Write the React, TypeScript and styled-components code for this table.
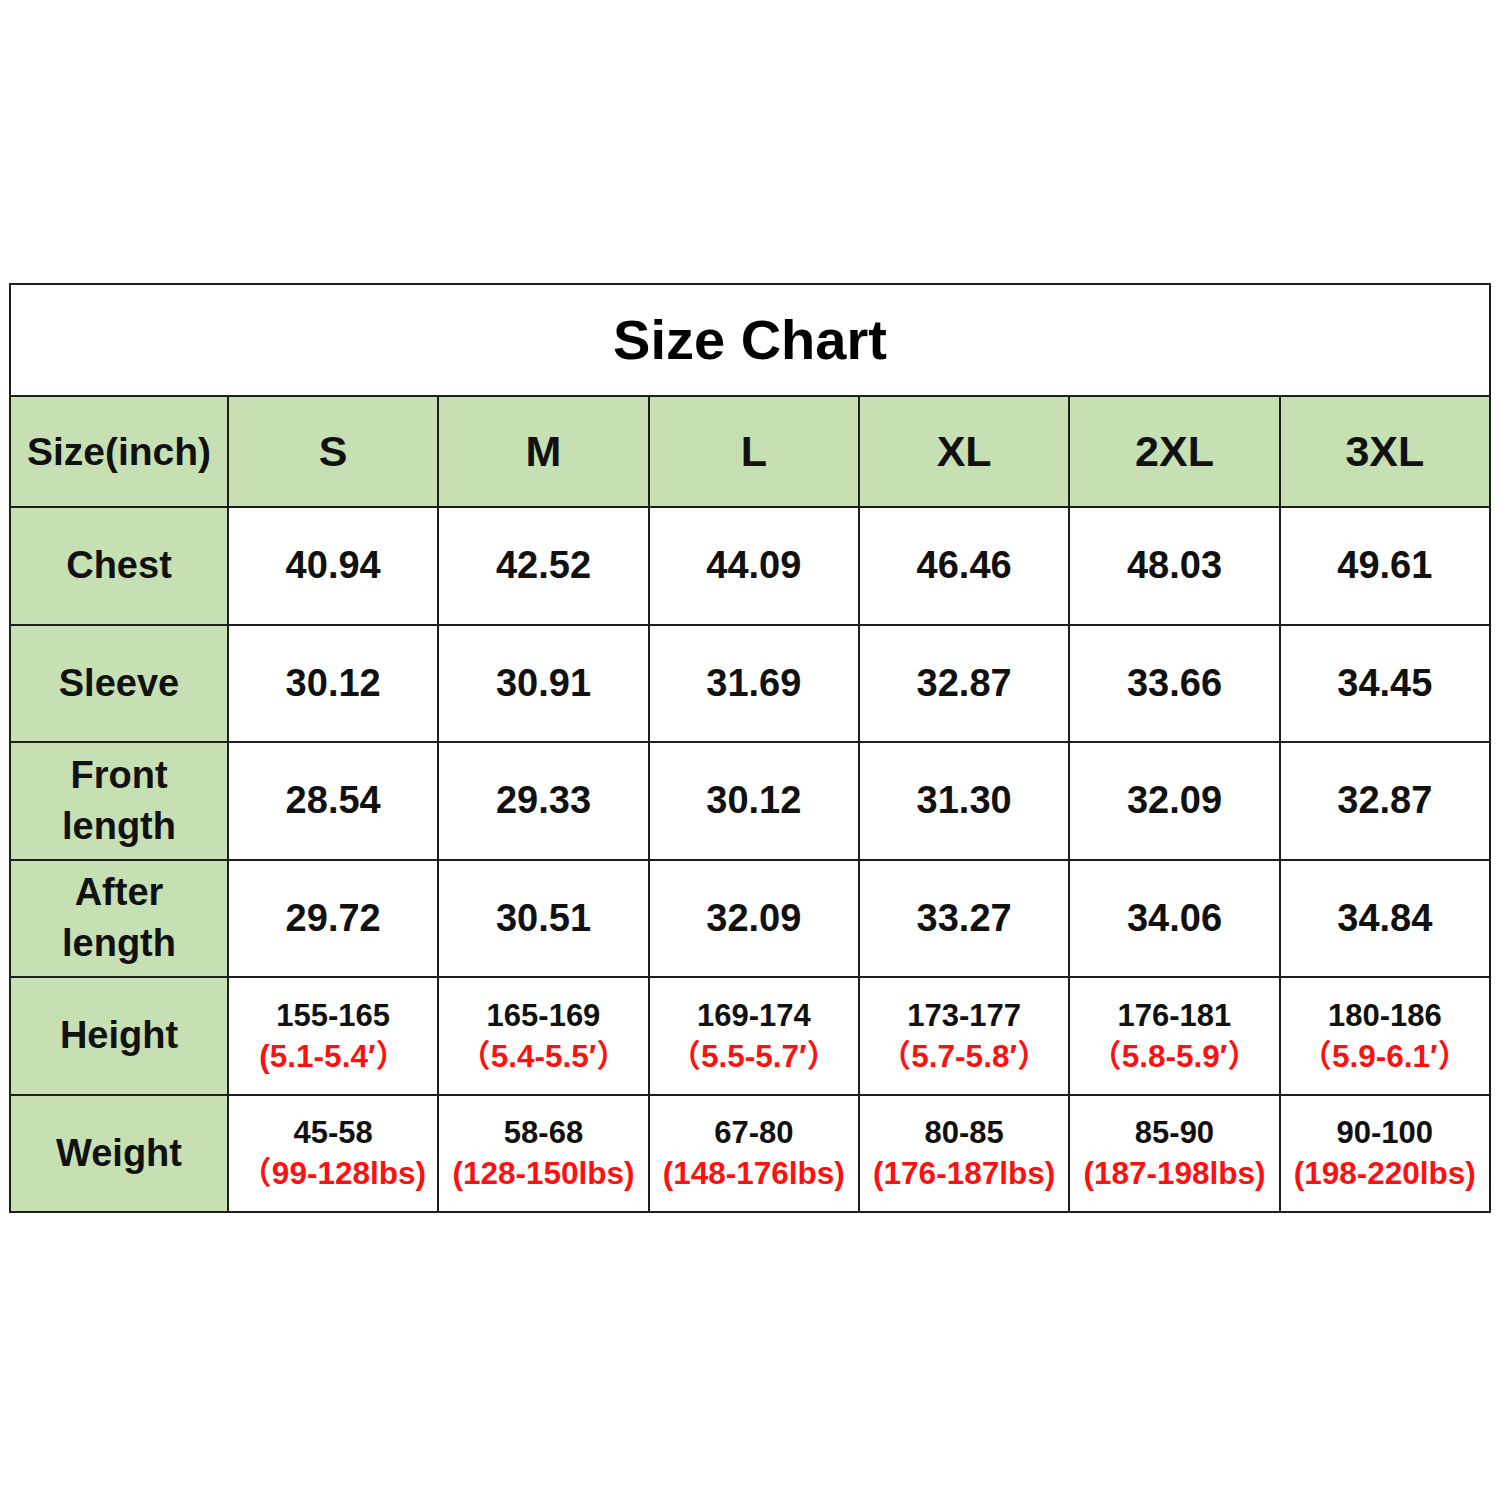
import styled, { createGlobalStyle } from 'styled-components'

const GlobalStyle = createGlobalStyle`
  html, body {
    margin: 0;
    padding: 0;
    background: #ffffff;
  }
  body {
    font-family: "Liberation Sans", Arial, "Noto Sans CJK SC", sans-serif;
    color: #111;
  }
`

interface Row {
  label: string[]
  values: string[]
}

interface RangeRow {
  label: string
  main: string[]
  sub: string[]
}

const sizes = ['S', 'M', 'L', 'XL', '2XL', '3XL']

const rows: Row[] = [
  { label: ['Chest'], values: ['40.94', '42.52', '44.09', '46.46', '48.03', '49.61'] },
  { label: ['Sleeve'], values: ['30.12', '30.91', '31.69', '32.87', '33.66', '34.45'] },
  { label: ['Front', 'length'], values: ['28.54', '29.33', '30.12', '31.30', '32.09', '32.87'] },
  { label: ['After', 'length'], values: ['29.72', '30.51', '32.09', '33.27', '34.06', '34.84'] },
]

const ranges: RangeRow[] = [
  {
    label: 'Height',
    main: ['155-165', '165-169', '169-174', '173-177', '176-181', '180-186'],
    sub: ['(5.1-5.4′）', '（5.4-5.5′）', '（5.5-5.7′）', '（5.7-5.8′）', '（5.8-5.9′）', '（5.9-6.1′）'],
  },
  {
    label: 'Weight',
    main: ['45-58', '58-68', '67-80', '80-85', '85-90', '90-100'],
    sub: ['（99-128lbs)', '(128-150lbs)', '(148-176lbs)', '(176-187lbs)', '(187-198lbs)', '(198-220lbs)'],
  },
]

const App = () => {
  return (
    <Page>
      <GlobalStyle />
      <Chart>
        <colgroup>
          <col style={{ width: 218 }} />
          {sizes.map(s => (
            <col key={s} />
          ))}
        </colgroup>
        <tbody>
          <TitleRow>
            <Title colSpan={7}>Size Chart</Title>
          </TitleRow>
          <HeadRow>
            <LabelCell $size={39}>Size(inch)</LabelCell>
            {sizes.map(s => (
              <HeadCell key={s}>{s}</HeadCell>
            ))}
          </HeadRow>
          {rows.map(r => (
            <BodyRow key={r.label.join(' ')}>
              <LabelCell $size={38}>
                {r.label.map(l => (
                  <Line key={l}>{l}</Line>
                ))}
              </LabelCell>
              {r.values.map((v, i) => (
                <ValueCell key={i}>{v}</ValueCell>
              ))}
            </BodyRow>
          ))}
          {ranges.map(r => (
            <BodyRow key={r.label}>
              <LabelCell $size={38}>{r.label}</LabelCell>
              {r.main.map((m, i) => (
                <RangeCell key={i}>
                  <Main>{m}</Main>
                  <Sub>{r.sub[i]}</Sub>
                </RangeCell>
              ))}
            </BodyRow>
          ))}
        </tbody>
      </Chart>
    </Page>
  )
}

const Page = styled.div`
  width: 1500px;
  height: 1500px;
  padding: 283px 0 0 9px;
  box-sizing: border-box;
`

const Chart = styled.table`
  width: 1482px;
  border-collapse: collapse;
  table-layout: fixed;
  border: 2px solid #1e1e1e;

  td {
    border: 2px solid #1e1e1e;
    padding: 0;
    text-align: center;
    vertical-align: middle;
    font-weight: bold;
  }
`

const TitleRow = styled.tr`
  height: 112px;
`

const Title = styled.td`
  && {
    border-bottom: 2px solid #1e1e1e;
    font-size: 56px;
    color: #000;
    padding-bottom: 2px;
  }
`

const HeadRow = styled.tr`
  height: 111px;
  background: #c6e0b4;
`

const BodyRow = styled.tr`
  height: 117.5px;
`

const LabelCell = styled.td<{ $size: number }>`
  && {
    background: #c6e0b4;
    font-size: ${p => p.$size}px;
    line-height: 51px;
    color: #111;
  }
`

const Line = styled.div`
  display: block;
`

const HeadCell = styled.td`
  && {
    font-size: 43px;
    color: #111;
  }
`

const ValueCell = styled.td`
  && {
    font-size: 38px;
    color: #111;
    background: #fff;
  }
`

const RangeCell = styled.td`
  && {
    background: #fff;
    font-size: 31px;
    line-height: 40px;
  }
`

const Main = styled.div`
  color: #111;
`

const Sub = styled.div`
  color: #ff1010;
  white-space: nowrap;
  font-size: 31.5px;
`

export default App
